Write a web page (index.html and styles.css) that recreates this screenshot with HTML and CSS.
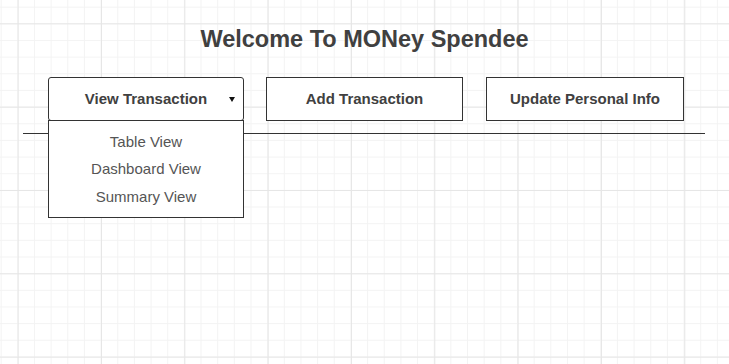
FILE: index.html
```html
<!DOCTYPE html>
<html lang="en">
<head>
<meta charset="utf-8">
<title>MONey Spendee</title>
<link rel="stylesheet" href="styles.css">
</head>
<body class="canvas">
<main class="page">
  <h1 class="title">Welcome To MONey Spendee</h1>
  <nav class="menu">
    <div class="menu-item dropdown">
      <div class="btn btn-rounded">View Transaction<span class="caret"></span></div>
      <ul class="dropdown-list">
        <li>Table View</li>
        <li>Dashboard View</li>
        <li>Summary View</li>
      </ul>
    </div>
    <div class="menu-item"><div class="btn btn-mid">Add Transaction</div></div>
    <div class="menu-item menu-item-last"><div class="btn btn-wide">Update Personal Info</div></div>
  </nav>
  <div class="divider"></div>
</main>
</body>
</html>
```

FILE: styles.css
```css
html, body {
  margin: 0;
  padding: 0;
}

.canvas {
  min-height: 100vh;
  font-family: "Liberation Sans", Arial, sans-serif;
  background-color: #ffffff;
  background-image:
    linear-gradient(to right, #e6e6e6 1px, transparent 1px),
    linear-gradient(to bottom, #e6e6e6 1px, transparent 1px),
    linear-gradient(to right, #f3f3f3 1px, transparent 1px),
    linear-gradient(to bottom, #f3f3f3 1px, transparent 1px);
  background-size:
    83.333px 83.333px,
    83.333px 83.333px,
    16.667px 16.667px,
    16.667px 16.667px;
  background-position:
    17.667px 0,
    0 23.333px,
    0.667px 0,
    0 6.667px;
}

.page {
  display: flex;
  flex-direction: column;
}

.title {
  margin: 0;
  padding-top: 25px;
  font-size: 23.5px;
  line-height: 28px;
  font-weight: bold;
  text-align: center;
  color: #404040;
}

.menu {
  display: flex;
  gap: 22px;
  padding-left: 48px;
  margin-top: 24px;
}

.menu-item {
  position: relative;
}

.menu-item-last {
  margin-left: 1px;
}

.btn {
  box-sizing: border-box;
  width: 196px;
  height: 44px;
  padding-bottom: 2px;
  border: 1px solid #333333;
  background: #ffffff;
  display: flex;
  align-items: center;
  justify-content: center;
  font-size: 15px;
  font-weight: bold;
  color: #404040;
}

.btn-mid {
  width: 197px;
}

.btn-wide {
  width: 198px;
}

.btn-rounded {
  border-radius: 3px;
}

.caret {
  position: absolute;
  right: 9px;
  top: 20px;
  width: 0;
  height: 0;
  border-left: 3.5px solid transparent;
  border-right: 3.5px solid transparent;
  border-top: 5px solid #111111;
}

.dropdown-list {
  position: absolute;
  z-index: 2;
  top: 43px;
  left: 0;
  box-sizing: border-box;
  width: 196px;
  margin: 0;
  padding: 7px 0 7px;
  list-style: none;
  border: 1px solid #333333;
  background: #ffffff;
}

.dropdown-list li {
  font-size: 15px;
  line-height: 27.33px;
  text-align: center;
  color: #555555;
}

.divider {
  height: 0;
  margin: 12px 24px 0 23px;
  border-top: 1px solid #333333;
}
```
